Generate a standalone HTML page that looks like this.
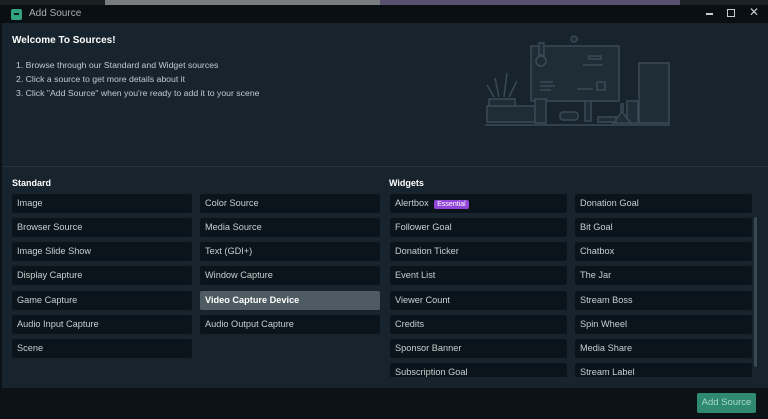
<!DOCTYPE html>
<html><head><style>
*{margin:0;padding:0;box-sizing:border-box}
body{width:768px;height:419px;background:#0b1318;font-family:"Liberation Sans",sans-serif;position:relative;overflow:hidden}
.strip{position:absolute;top:0;height:5px}
.title{position:absolute;top:5px;left:0;width:768px;height:18px;background:#090f13;color:#a7b0b5;font-size:10px}
.main{position:absolute;top:23px;left:2px;width:766px;height:365px;background:#17242d}
.item{position:absolute;height:19px;background:#0b141a;border-radius:2px;color:#c9cfd2;font-size:9.2px;line-height:19px;padding-left:5px;white-space:nowrap;overflow:hidden}
.hd{position:absolute;color:#fff;font-weight:bold;font-size:9px}
ol{position:absolute;left:14px;top:35px;color:#c4cace;font-size:8.7px;line-height:14px;list-style:none}
</style></head><body>
<div class="strip" style="left:0;width:105px;background:#1a1f22"></div>
<div class="strip" style="left:105px;width:275px;background:#7b7e80"></div>
<div class="strip" style="left:380px;width:300px;background:#5c5070"></div>
<div class="strip" style="left:680px;width:88px;background:#1c2226"></div>
<div class="title">
<div style="position:absolute;left:11px;top:4px;width:11px;height:11px;background:#31a47f;border-radius:2px"><div style="position:absolute;left:3px;top:4px;width:5px;height:2px;background:#0d1a16"></div></div>
<div style="position:absolute;left:29px;top:3px">Add Source</div>
<div style="position:absolute;left:706px;top:8px;width:7px;height:1.5px;background:#c8cdd0"></div>
<div style="position:absolute;left:727px;top:4px;width:8px;height:8px;border:1.5px solid #c8cdd0"></div>
<div style="position:absolute;left:749px;top:0px;color:#c8cdd0;font-size:12px">✕</div>
</div>
<div class="main">
<div class="hd" style="left:10px;top:12px;font-size:10px">Welcome To Sources!</div>
<svg style="position:absolute;left:483px;top:10px" width="185" height="95" viewBox="0 0 185 95" fill="#1f2d36" stroke="#3a4a54" stroke-width="1.5">
<circle cx="89" cy="6" r="3"/>
<rect x="46" y="13" width="88" height="55"/>
<rect x="54" y="10" width="5" height="12"/><circle cx="56" cy="28" r="5"/>
<rect x="104" y="23" width="12" height="3"/><line x1="98" y1="32" x2="118" y2="32"/>
<rect x="112" y="49" width="8" height="8"/><line x1="92" y1="56" x2="108" y2="56"/>
<line x1="55" y1="49" x2="68" y2="49"/><line x1="55" y1="53" x2="70" y2="53"/><line x1="55" y1="57" x2="66" y2="57"/>
<rect x="154" y="30" width="30" height="60"/>
<rect x="2" y="73" width="48" height="16"/><rect x="4" y="66" width="26" height="7"/>
<path d="M14 64 L10 45 M19 64 L22 40 M24 64 L32 48 M9 64 L2 52" fill="none"/>
<rect x="50" y="66" width="11" height="24"/><rect x="142" y="68" width="11" height="22"/>
<path d="M136 70 v10 l-8 10 h18 l-8 -10 v-10"/>
<rect x="75" y="79" width="18" height="8" rx="3"/><rect x="113" y="84" width="18" height="5"/>
<rect x="100" y="68" width="6" height="20"/>
<line x1="0" y1="92" x2="185" y2="92"/>
</svg>
<ol><li>1. Browse through our Standard and Widget sources</li><li>2. Click a source to get more details about it</li><li>3. Click "Add Source" when you're ready to add it to your scene</li></ol>
<div style="position:absolute;left:0;top:143px;width:766px;height:1px;background:#24333c"></div>
<div class="hd" style="left:10px;top:155px">Standard</div>
<div class="hd" style="left:387px;top:155px">Widgets</div>

<div class="item" style="left:10px;top:171px;width:180px">Image</div>
<div class="item" style="left:10px;top:195px;width:180px">Browser Source</div>
<div class="item" style="left:10px;top:219px;width:180px">Image Slide Show</div>
<div class="item" style="left:10px;top:243px;width:180px">Display Capture</div>
<div class="item" style="left:10px;top:268px;width:180px">Game Capture</div>
<div class="item" style="left:10px;top:292px;width:180px">Audio Input Capture</div>
<div class="item" style="left:10px;top:316px;width:180px">Scene</div>
<div class="item" style="left:198px;top:171px;width:180px">Color Source</div>
<div class="item" style="left:198px;top:195px;width:180px">Media Source</div>
<div class="item" style="left:198px;top:219px;width:180px">Text (GDI+)</div>
<div class="item" style="left:198px;top:243px;width:180px">Window Capture</div>
<div class="item" style="left:198px;top:268px;width:180px;background:#4e5b62;color:#fff;font-weight:bold">Video Capture Device</div>
<div class="item" style="left:198px;top:292px;width:180px">Audio Output Capture</div>

<div style="position:absolute;left:385px;top:168px;width:372px;height:186px;overflow:hidden">
<div class="item" style="left:3px;top:3px;width:177px">Alertbox <span style="background:#9146d8;color:#fff;font-size:7px;padding:1px 3px;border-radius:2px;margin-left:3px">Essential</span></div>
<div class="item" style="left:3px;top:27px;width:177px">Follower Goal</div>
<div class="item" style="left:3px;top:51px;width:177px">Donation Ticker</div>
<div class="item" style="left:3px;top:75px;width:177px">Event List</div>
<div class="item" style="left:3px;top:100px;width:177px">Viewer Count</div>
<div class="item" style="left:3px;top:124px;width:177px">Credits</div>
<div class="item" style="left:3px;top:148px;width:177px">Sponsor Banner</div>
<div class="item" style="left:3px;top:172px;width:177px">Subscription Goal</div>
<div class="item" style="left:188px;top:3px;width:177px">Donation Goal</div>
<div class="item" style="left:188px;top:27px;width:177px">Bit Goal</div>
<div class="item" style="left:188px;top:51px;width:177px">Chatbox</div>
<div class="item" style="left:188px;top:75px;width:177px">The Jar</div>
<div class="item" style="left:188px;top:100px;width:177px">Stream Boss</div>
<div class="item" style="left:188px;top:124px;width:177px">Spin Wheel</div>
<div class="item" style="left:188px;top:148px;width:177px">Media Share</div>
<div class="item" style="left:188px;top:172px;width:177px">Stream Label</div>
<div style="position:absolute;left:367px;top:26px;width:3px;height:150px;background:#3a4850;border-radius:2px"></div>
</div>
</div>
<div style="position:absolute;left:697px;top:393px;width:59px;height:20px;background:#2f8a71;border-radius:2px;color:#a9d9c8;font-size:9.5px;line-height:20px;text-align:center">Add Source</div>
</body></html>
